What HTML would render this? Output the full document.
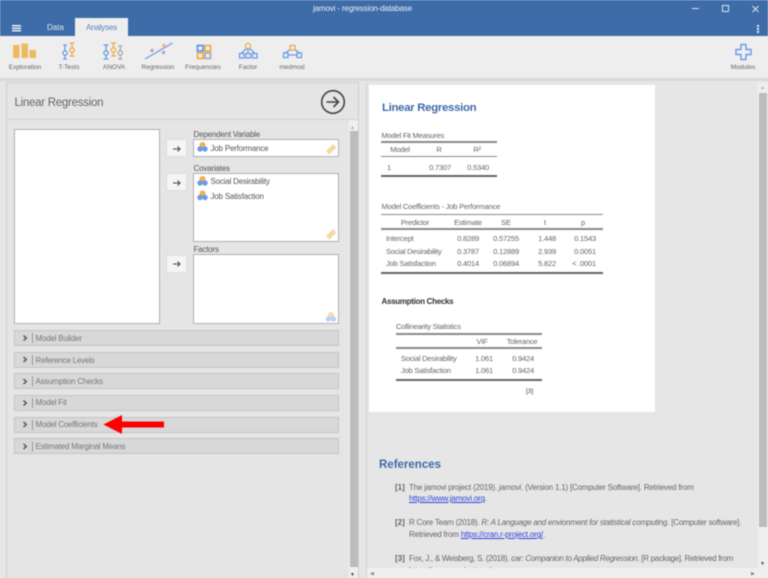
<!DOCTYPE html>
<html><head><meta charset="utf-8"><style>
html,body{margin:0;padding:0;width:768px;height:578px;overflow:hidden;background:#e6e6e6}
#p{position:relative;width:768px;height:578px;overflow:hidden;font-family:"Liberation Sans",sans-serif;filter:blur(.45px)}
#p div,#p svg,#p a{position:absolute}
.t{white-space:nowrap;line-height:12px}
.tb{font-size:6.5px;color:#666;text-align:center;width:70px;top:62px}
.bx{background:#fff;border:1.5px solid #b0b0b0;box-sizing:border-box}
.ar{left:166px;width:21px;height:18px;background:#f5f5f5;border:1px solid #ddd;box-sizing:border-box}
.lb{font-size:8px;letter-spacing:-.2px;color:#555}
.v{font-size:8px;letter-spacing:-.2px;color:#555}
.sec{left:14px;width:325px;height:16px;background:#d8d8d8;border:1px solid #c4c4c4;box-sizing:border-box}
.st{left:35.500px;font-size:8px;letter-spacing:-.2px;color:#777}
.d{font-size:7.600px;letter-spacing:-.23px;color:#666}
.r{text-align:right}
.c{text-align:center}
.ln{background:#8a8a8a;height:1.500px}
.tl{background:#666;height:2px}
.ref{font-size:8px;letter-spacing:-.19px;color:#666}
.ref a{position:static!important;color:#3344dd;text-decoration:underline}
</style></head><body><div id="p">
<div style="left:0;top:0;width:768px;height:36px;background:#3e6ca8"></div>
<div class="t" style="left:313px;top:3px;color:#e8eef6;font-size:8px;letter-spacing:-.15px">jamovi - regression-database</div>
<svg style="left:680px;top:0" width="88" height="18" fill="none" stroke="#dbe4f0"><path d="M12 8.500h7"/><rect x="42.500" y="5.500" width="6" height="6"/><path d="M72.500 6l6 6M78.500 6l-6 6"/></svg>
<svg style="left:12px;top:24px" width="11" height="8" fill="#e8eef6"><rect width="9" height="1.500" y="1"/><rect width="9" height="1.500" y="3.500"/><rect width="9" height="1.500" y="6"/></svg>
<div class="t" style="left:47px;top:22px;color:#dde6f2;font-size:8px">Data</div>
<div style="left:75px;top:18px;width:53px;height:18px;background:#eee"></div>
<div class="t" style="left:75px;width:53px;text-align:center;top:22px;color:#5b82b8;font-size:8px;letter-spacing:-.2px">Analyses</div>
<svg style="left:757px;top:25px" width="3" height="8" fill="#e8eef6"><rect width="2" height="2" y="0"/><rect width="2" height="2" y="3"/><rect width="2" height="2" y="6"/></svg>
<div style="left:0;top:36px;width:768px;height:42px;background:#eee"></div>
<div style="left:0;top:78px;width:768px;height:3px;background:#d8d8d8"></div>
<svg style="left:0;top:36px" width="768" height="26" fill="none" stroke-width="1.300">
<rect x="13" y="9" width="6.500" height="13" fill="#efb95f"/><rect x="21.500" y="7.500" width="6.500" height="14.500" fill="#efb95f"/><rect x="29.500" y="14" width="6.500" height="8" fill="#efb95f"/>
<g stroke="#6b9be8"><path d="M63 9h4M65 9v6M65 19v4M63 23h4"/><circle cx="65" cy="17" r="2.200"/></g>
<g stroke="#e8ae4c"><path d="M69.500 7h5M72 7v5M72 16v4M69.500 20h5"/><circle cx="72" cy="14" r="2.200"/></g>
<g stroke="#6b9be8"><path d="M103.500 9h5M106 9v6M106 19v4M103.500 23h5"/><circle cx="106" cy="17" r="2.200"/></g>
<g stroke="#e8ae4c"><path d="M111 7h5M113.500 7v5M113.500 16v4M111 20h5"/><circle cx="113.500" cy="14" r="2.200"/></g>
<g stroke="#aaa"><path d="M118 10h4.500M120.300 10v5M120.300 19v4M118 23h4.500"/><circle cx="120.300" cy="17" r="2.200"/></g>
<path d="M145 23L172.500 7" stroke="#6b9be8"/><rect x="150.500" y="13" width="3" height="3" fill="#aaa" stroke="none"/><rect x="162.500" y="8" width="3" height="3" fill="#efb95f" stroke="none"/><rect x="162" y="15" width="3" height="3" fill="#aaa" stroke="none"/>
<rect x="197.500" y="9.500" width="5.500" height="5.500" stroke="#5f93ea" stroke-width="1.700"/><rect x="205" y="9.500" width="5.500" height="5.500" stroke="#e8ae4c" stroke-width="1.700"/><rect x="197.500" y="17" width="5.500" height="5.500" stroke="#e8ae4c" stroke-width="1.700"/><rect x="205" y="17" width="5.500" height="5.500" stroke="#aaa" stroke-width="1.700"/>
<circle cx="248" cy="10" r="2.600" stroke="#e8ae4c"/><path d="M246.500 12.500L241.500 17M248 12.500V17M249.500 12.500L254.500 17" stroke="#6b9be8"/><g stroke="#6b9be8"><rect x="239.500" y="17.500" width="4.500" height="4.500"/><rect x="246" y="17.500" width="4.500" height="4.500"/><rect x="252.500" y="17.500" width="4.500" height="4.500"/></g>
<rect x="290" y="9.500" width="5" height="4.500" stroke="#e8ae4c"/><path d="M289.500 14l-4 3M295.500 14l4 3M288 19h9" stroke="#6b9be8"/><rect x="283.500" y="17" width="4.500" height="4.500" stroke="#6b9be8"/><rect x="297" y="17" width="4.500" height="4.500" stroke="#6b9be8"/>
<path d="M741 8.500h5v5h5v5h-5v5h-5v-5h-5v-5h5z" stroke="#6b9be8" stroke-width="1.400"/>
</svg>
<div class="t tb" style="left:-10px">Exploration</div><div class="t tb" style="left:34px">T-Tests</div><div class="t tb" style="left:79px">ANOVA</div><div class="t tb" style="left:123px">Regression</div><div class="t tb" style="left:168px">Frequencies</div><div class="t tb" style="left:213px">Factor</div><div class="t tb" style="left:257px">medmod</div><div class="t tb" style="left:708px">Modules</div>

<div style="left:6px;top:82px;width:353px;height:500px;background:#e5e5e5;border:1px solid #cfcfcf;box-sizing:border-box"></div>
<div style="left:7px;top:119px;width:351px;height:1px;background:#d2d2d2"></div>
<div class="t" style="left:14.500px;top:97px;font-size:11.500px;letter-spacing:-.27px;color:#666">Linear Regression</div>
<svg style="left:320px;top:89px" width="26" height="26" fill="none" stroke="#444" stroke-width="1.600"><circle cx="13" cy="13" r="11.300"/><path d="M6.500 13h12M13.500 8l5 5-5 5"/></svg>
<div style="left:349px;top:120px;width:9px;height:458px;background:#efefef"></div>
<div style="left:349.500px;top:131px;width:8px;height:436px;background:#bcbcbc"></div>
<div class="t" style="left:350px;top:569px;font-size:5px;color:#444">▼</div>
<div class="t" style="left:350px;top:122px;font-size:5px;color:#aaa">▲</div>
<div class="bx" style="left:14px;top:129px;width:146px;height:195px"></div>
<div class="ar" style="top:139px"></div><div class="ar" style="top:173px"></div><div class="ar" style="top:255px"></div>
<svg style="left:166px;top:140px" width="21" height="132" fill="none" stroke="#444"><path d="M7 9h7M11.500 6.500l2.500 2.500-2.500 2.500M7 43h7M11.500 40.500l2.500 2.500-2.500 2.500M7 124h7M11.500 121.500l2.500 2.500-2.500 2.500"/></svg>
<div class="t lb" style="left:193.500px;top:129px">Dependent Variable</div>
<div class="bx" style="left:193px;top:139px;width:146px;height:18px"></div>
<div class="t lb" style="left:193.500px;top:163px">Covariates</div>
<div class="bx" style="left:193px;top:172.500px;width:146px;height:69.500px"></div>
<div class="t lb" style="left:193.500px;top:243.500px">Factors</div>
<div class="bx" style="left:193px;top:254px;width:146px;height:70px"></div>
<svg style="left:193px;top:139px" width="146" height="190">
<g><circle cx="9.500" cy="6" r="3" fill="#efb04b"/><circle cx="7" cy="10" r="2.700" fill="#6b9be8"/><circle cx="12" cy="10" r="2.700" fill="#6b9be8"/></g>
<g transform="translate(0 34)"><circle cx="9.500" cy="6" r="3" fill="#efb04b"/><circle cx="7" cy="10" r="2.700" fill="#6b9be8"/><circle cx="12" cy="10" r="2.700" fill="#6b9be8"/></g>
<g transform="translate(0 48.500)"><circle cx="9.500" cy="6" r="3" fill="#efb04b"/><circle cx="7" cy="10" r="2.700" fill="#6b9be8"/><circle cx="12" cy="10" r="2.700" fill="#6b9be8"/></g>
<path d="M133 12l7-7 3.500 3.500-7 7z" fill="#f3d9a5"/><path d="M133 97l7-7 3.500 3.500-7 7z" fill="#f3d9a5"/>
<g opacity=".45"><circle cx="138" cy="176" r="3" fill="#efb04b"/><circle cx="135.500" cy="180" r="2.700" fill="#6b9be8"/><circle cx="140.500" cy="180" r="2.700" fill="#6b9be8"/></g>
</svg>
<div class="t v" style="left:210.500px;top:143px">Job Performance</div>
<div class="t v" style="left:210.500px;top:176px">Social Desirability</div>
<div class="t v" style="left:210.500px;top:191px">Job Satisfaction</div>

<div class="sec" style="top:330px"></div><div class="sec" style="top:351.500px"></div><div class="sec" style="top:373px"></div><div class="sec" style="top:395px"></div><div class="sec" style="top:416.500px"></div><div class="sec" style="top:438px"></div>
<svg style="left:14px;top:330px" width="30" height="125" fill="none"><g stroke="#555" stroke-width="1.500"><path d="M9.500 5.500l2.800 2.500-2.800 2.500M9.500 27l2.800 2.500-2.800 2.500M9.500 49l2.800 2.500-2.800 2.500M9.500 70.500l2.800 2.500-2.800 2.500M9.500 92l2.800 2.500-2.800 2.500M9.500 114l2.800 2.500-2.800 2.500"/></g><g stroke="#999"><path d="M18.500 3v10M18.500 25v10M18.500 46.500v10M18.500 68v10M18.500 90v10M18.500 111.500v10"/></g></svg>
<div class="t st" style="top:333px">Model Builder</div><div class="t st" style="top:355px">Reference Levels</div><div class="t st" style="top:375.500px">Assumption Checks</div><div class="t st" style="top:397px">Model Fit</div><div class="t st" style="top:418.500px">Model Coefficients</div><div class="t st" style="top:440.500px">Estimated Marginal Means</div>
<svg style="left:100px;top:413px" width="68" height="24" fill="#f00"><path d="M3.500 11.500L22 2v6.500h42v6H22V21z"/></svg>

<div style="left:366px;top:82px;width:402px;height:496px;background:#e6e6e6;border-left:1px solid #d2d2d2;box-sizing:border-box"></div>
<div style="left:369px;top:85px;width:286px;height:327px;background:#fff"></div>
<div style="left:758px;top:82px;width:10px;height:496px;background:#efefef"></div>
<div style="left:759px;top:93px;width:8px;height:434px;background:#bcbcbc"></div>
<div class="t" style="left:760px;top:82px;font-size:5px;color:#aaa">▲</div>
<div class="t" style="left:760px;top:558px;font-size:5px;color:#444">▼</div>
<div style="left:367px;top:568px;width:391px;height:10px;background:#efefef"></div>
<div class="t" style="left:370px;top:568px;font-size:5px;color:#888">◀</div><div class="t" style="left:751px;top:568px;font-size:5px;color:#888">▶</div>

<div class="t" style="left:382px;top:102px;font-size:11.400px;letter-spacing:-.3px;font-weight:bold;color:#3e6ca8">Linear Regression</div>
<div class="t d" style="left:381.500px;top:129.500px">Model Fit Measures</div>
<div class="ln" style="left:381px;top:141px;width:116px"></div>
<div class="t d c" style="left:381px;width:38px;top:144px">Model</div><div class="t d c" style="left:427px;width:24px;top:144px">R</div><div class="t d c" style="left:464px;width:26px;top:144px">R²</div>
<div class="ln" style="left:381px;top:155.500px;width:116px"></div>
<div class="t d" style="left:387px;top:161.500px">1</div><div class="t d r" style="left:420px;width:31px;top:161.500px">0.7307</div><div class="t d r" style="left:458px;width:31px;top:161.500px">0.5340</div>
<div class="tl" style="left:381px;top:175px;width:116px"></div>

<div class="t d" style="left:381.500px;top:201px">Model Coefficients - Job Performance</div>
<div class="ln" style="left:381px;top:213.500px;width:222px"></div>
<div class="t d c" style="left:381px;width:68px;top:216.500px">Predictor</div><div class="t d c" style="left:451px;width:34px;top:216.500px">Estimate</div><div class="t d c" style="left:493px;width:26px;top:216.500px">SE</div><div class="t d c" style="left:540px;width:10px;top:216.500px">t</div><div class="t d c" style="left:578px;width:10px;top:216.500px">p</div>
<div class="ln" style="left:381px;top:228px;width:222px"></div>
<div class="t d" style="left:386px;top:233px">Intercept</div><div class="t d" style="left:386px;top:246px">Social Desirability</div><div class="t d" style="left:386px;top:258px">Job Satisfaction</div>
<div class="t d r" style="left:449px;width:30px;top:233px">0.8289</div><div class="t d r" style="left:449px;width:30px;top:246px">0.3787</div><div class="t d r" style="left:449px;width:30px;top:258px">0.4014</div>
<div class="t d r" style="left:489px;width:30px;top:233px">0.57255</div><div class="t d r" style="left:489px;width:30px;top:246px">0.12889</div><div class="t d r" style="left:489px;width:30px;top:258px">0.06894</div>
<div class="t d r" style="left:526px;width:30px;top:233px">1.448</div><div class="t d r" style="left:526px;width:30px;top:246px">2.939</div><div class="t d r" style="left:526px;width:30px;top:258px">5.822</div>
<div class="t d r" style="left:566px;width:30px;top:233px">0.1543</div><div class="t d r" style="left:566px;width:30px;top:246px">0.0051</div><div class="t d r" style="left:566px;width:30px;top:258px">&lt; .0001</div>
<div class="tl" style="left:381px;top:271.500px;width:222px"></div>

<div class="t" style="left:381.500px;top:296px;font-size:8px;letter-spacing:-.3px;font-weight:bold;color:#333">Assumption Checks</div>
<div class="t d" style="left:396px;top:320.500px">Collinearity Statistics</div>
<div class="ln" style="left:396px;top:333px;width:146px"></div>
<div class="t d c" style="left:472px;width:20px;top:335.500px">VIF</div><div class="t d c" style="left:505px;width:34px;top:335.500px">Tolerance</div>
<div class="ln" style="left:396px;top:347px;width:146px"></div>
<div class="t d" style="left:401px;top:353px">Social Desirability</div><div class="t d" style="left:401px;top:365px">Job Satisfaction</div>
<div class="t d r" style="left:463px;width:30px;top:353px">1.061</div><div class="t d r" style="left:463px;width:30px;top:365px">1.061</div>
<div class="t d r" style="left:504px;width:30px;top:353px">0.9424</div><div class="t d r" style="left:504px;width:30px;top:365px">0.9424</div>
<div class="tl" style="left:396px;top:379px;width:146px"></div>
<div class="t" style="left:526px;top:385.500px;font-size:6.500px;color:#444">[3]</div>

<div class="t" style="left:379px;top:459px;font-size:11.500px;font-weight:bold;color:#3e6ca8">References</div>
<div class="t ref" style="left:395px;top:482px;font-weight:bold;letter-spacing:0">[1]</div>
<div class="t ref" style="left:409px;top:482px">The jamovi project (2019). <i>jamovi</i>. (Version 1.1) [Computer Software]. Retrieved from</div>
<div class="t ref" style="left:409px;top:493px"><a>https://www.jamovi.org</a>.</div>
<div class="t ref" style="left:395px;top:517px;font-weight:bold;letter-spacing:0">[2]</div>
<div class="t ref" style="left:409px;top:517px;letter-spacing:-.22px">R Core Team (2018). <i>R: A Language and envionment for statistical computing</i>. [Computer software].</div>
<div class="t ref" style="left:409px;top:529px">Retrieved from <a>https://cran.r-project.org/</a>.</div>
<div class="t ref" style="left:395px;top:553px;font-weight:bold;letter-spacing:0">[3]</div>
<div class="t ref" style="left:409px;top:553px;letter-spacing:-.29px">Fox, J., &amp; Weisberg, S. (2018). <i>car: Companion to Applied Regression</i>. [R package]. Retrieved from</div>
<div class="t ref" style="left:409px;top:564.500px;height:3.500px;overflow:hidden"><a>https://cran.r-project.org/</a></div>
</div></body></html>
